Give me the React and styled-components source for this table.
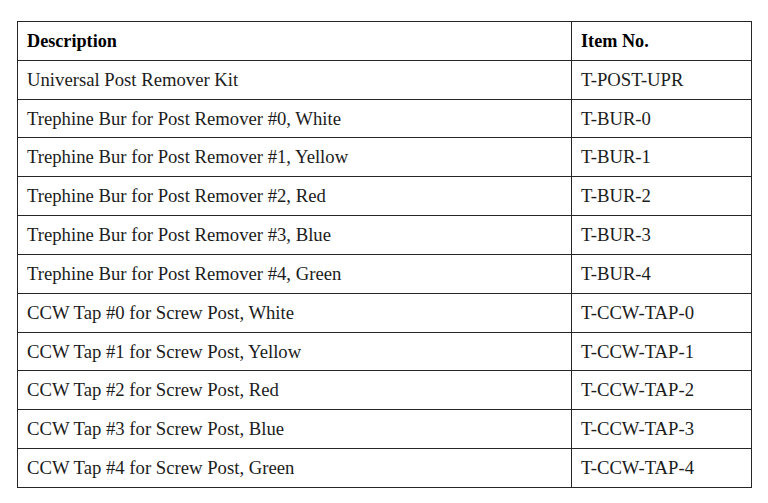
import React from 'react';
import styled, { createGlobalStyle } from 'styled-components';

const GlobalStyle = createGlobalStyle`
  html, body {
    margin: 0;
    padding: 0;
    background: #fff;
  }
`;

const Page = styled.div`
  padding: 21px 0 0 17px;
  font-family: "Liberation Serif", "Times New Roman", serif;
  color: #161616;
`;

const Table = styled.table`
  width: 735px;
  border-collapse: collapse;
  border: 1px solid #5c5c5c;
  table-layout: fixed;
`;

const Row = styled.tr`
  height: 38.83px;
`;

const Cell = styled.td`
  border: 1px solid #262626;
  padding: 0 9px;
  font-size: ${props => (props.header ? '18.2px' : '18.7px')};
  line-height: 20px;
  text-align: left;
  vertical-align: middle;
  white-space: nowrap;
  font-weight: ${props => (props.header ? 700 : 400)};
  color: ${props => (props.header ? '#000' : '#1c1c1c')};
`;

const items = [
  ['Universal Post Remover Kit', 'T-POST-UPR'],
  ['Trephine Bur for Post Remover #0, White', 'T-BUR-0'],
  ['Trephine Bur for Post Remover #1, Yellow', 'T-BUR-1'],
  ['Trephine Bur for Post Remover #2, Red', 'T-BUR-2'],
  ['Trephine Bur for Post Remover #3, Blue', 'T-BUR-3'],
  ['Trephine Bur for Post Remover #4, Green', 'T-BUR-4'],
  ['CCW Tap #0 for Screw Post, White', 'T-CCW-TAP-0'],
  ['CCW Tap #1 for Screw Post, Yellow', 'T-CCW-TAP-1'],
  ['CCW Tap #2 for Screw Post, Red', 'T-CCW-TAP-2'],
  ['CCW Tap #3 for Screw Post, Blue', 'T-CCW-TAP-3'],
  ['CCW Tap #4 for Screw Post, Green', 'T-CCW-TAP-4'],
];

export default function App() {
  return (
    <Page>
      <GlobalStyle />
      <Table>
        <colgroup>
          <col style={{ width: 554 }} />
          <col />
        </colgroup>
        <thead>
          <Row>
            <Cell as="th" header>Description</Cell>
            <Cell as="th" header>Item No.</Cell>
          </Row>
        </thead>
        <tbody>
          {items.map(([desc, no]) => (
            <Row key={no}>
              <Cell>{desc}</Cell>
              <Cell>{no}</Cell>
            </Row>
          ))}
        </tbody>
      </Table>
    </Page>
  );
}
